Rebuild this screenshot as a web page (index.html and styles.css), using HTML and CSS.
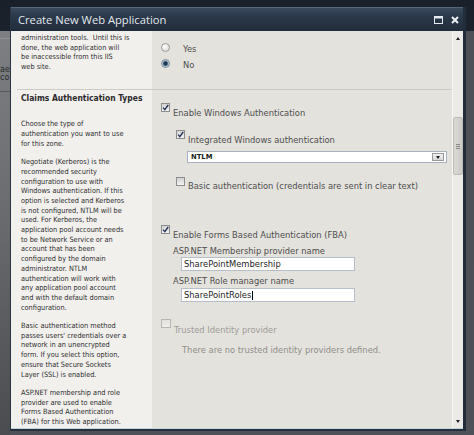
FILE: index.html
```html
<!DOCTYPE html>
<html lang="en">
<head>
<meta charset="utf-8">
<title>Create New Web Application</title>
<link rel="stylesheet" href="styles.css">
</head>
<body>
<div class="stage">
  <div class="page-left">
    <div class="page-left-body">
      <div class="bg-line"></div>
      <div class="bg-text">ae<br>co</div>
      <div class="bg-line dark"></div>
    </div>
  </div>
  <div class="dialog">
    <div class="titlebar">
      <span class="title">Create New Web Application</span>
      <span class="title-ctrls">
        <svg class="ic-max" width="9" height="8" viewBox="0 0 9 8"><rect x="0.5" y="0.5" width="8" height="7" fill="none" stroke="#e6ebf1"/><rect x="0.5" y="0.5" width="8" height="2" fill="#e6ebf1"/></svg>
        <svg class="ic-close" width="8" height="8" viewBox="0 0 8 8"><path d="M1 1L7 7M7 1L1 7" stroke="#eef2f6" stroke-width="2"/></svg>
      </span>
    </div>
    <div class="dlg-body">
      <div class="content">
        <div class="section s1">
          <div class="desc">
            <p>administration tools.&nbsp; Until this is<br>done, the web application will<br>be inaccessible from this IIS<br>web site.</p>
          </div>
          <div class="ctrl">
            <div class="radio-row"><span class="radio"></span><span class="lbl">Yes</span></div>
            <div class="radio-row"><span class="radio on"></span><span class="lbl">No</span></div>
          </div>
        </div>
        <div class="sep"></div>
        <div class="section s2">
          <div class="desc">
            <h3>Claims Authentication Types</h3>
            <p>Choose the type of<br>authentication you want to use<br>for this zone.</p>
            <p>Negotiate (Kerberos) is the<br>recommended security<br>configuration to use with<br>Windows authentication. If this<br>option is selected and Kerberos<br>is not configured, NTLM will be<br>used. For Kerberos, the<br>application pool account needs<br>to be Network Service or an<br>account that has been<br>configured by the domain<br>administrator. NTLM<br>authentication will work with<br>any application pool account<br>and with the default domain<br>configuration.</p>
            <p>Basic authentication method<br>passes users' credentials over a<br>network in an unencrypted<br>form. If you select this option,<br>ensure that Secure Sockets<br>Layer (SSL) is enabled.</p>
            <p>ASP.NET membership and role<br>provider are used to enable<br>Forms Based Authentication<br>(FBA) for this Web application.</p>
          </div>
          <div class="ctrl">
            <div class="cb-row r1"><span class="cb on"><svg viewBox="0 0 7 7" width="7" height="7"><path d="M1 3.6L2.8 5.6L6.2 1" stroke="#27355a" stroke-width="1.4" fill="none"/></svg></span><span class="lbl">Enable Windows Authentication</span></div>
            <div class="cb-row r2 sub"><span class="cb on"><svg viewBox="0 0 7 7" width="7" height="7"><path d="M1 3.6L2.8 5.6L6.2 1" stroke="#27355a" stroke-width="1.4" fill="none"/></svg></span><span class="lbl">Integrated Windows authentication</span></div>
            <div class="select"><span class="sel-text">NTLM</span><span class="sel-btn"><span class="tri-down"></span></span></div>
            <div class="cb-row r3 sub"><span class="cb"></span><span class="lbl">Basic authentication (credentials are sent in clear text)</span></div>
            <div class="cb-row r4"><span class="cb on"><svg viewBox="0 0 7 7" width="7" height="7"><path d="M1 3.6L2.8 5.6L6.2 1" stroke="#27355a" stroke-width="1.4" fill="none"/></svg></span><span class="lbl">Enable Forms Based Authentication (FBA)</span></div>
            <div class="field-lbl f1">ASP.NET Membership provider name</div>
            <div class="input i1">SharePointMembership</div>
            <div class="field-lbl f2">ASP.NET Role manager name</div>
            <div class="input i2">SharePointRoles<span class="caret"></span></div>
            <div class="cb-row r5 disabled"><span class="cb dis"></span><span class="lbl">Trusted Identity provider</span></div>
            <div class="note">There are no trusted identity providers defined.</div>
          </div>
        </div>
      </div>
      <div class="scrollbar">
        <div class="sb-btn"><span class="tri-up"></span></div>
        <div class="sb-track"><div class="sb-thumb"><span class="grip"></span></div></div>
        <div class="sb-btn"><span class="tri-down"></span></div>
      </div>
    </div>
  </div>
  <div class="page-right"></div>
</div>
</body>
</html>
```
FILE: styles.css
```css
* { box-sizing: border-box; }
html, body { margin: 0; padding: 0; }
body {
  width: 474px;
  height: 435px;
  overflow: hidden;
  background: #4f5158;
  font-family: "DejaVu Sans", sans-serif;
}
p, h3 { margin: 0; }

.stage {
  display: flex;
  height: 435px;
  background: linear-gradient(#19202a 0, #1b222c 31px, #4e5058 31px, #4f5158 100%);
}

/* page behind the dialog */
.page-left {
  width: 10px;
  flex: none;
  padding-top: 31px;
  overflow: hidden;
}
.page-left-body {
  height: 404px;
  background: linear-gradient(#7d7f83, #6c6e72 40%, #4a4c50);
  overflow: hidden;
}
.bg-line { height: 1px; margin-top: 7px; background: #909297; }
.bg-line.dark { margin-top: 9px; background: #55575b; }
.bg-text {
  margin-top: 27px;
  font-size: 8px;
  line-height: 8px;
  color: #2a2b2e;
  white-space: nowrap;
}
.page-right { flex: 1; }

/* dialog */
.dialog {
  width: 456px;
  flex: none;
  margin-top: 7px;
  align-self: flex-start;
  border-left: 1px solid #2a3544;
  border-right: 3px solid #222d3b;
  border-bottom: 2px solid #27313e;
}
.titlebar {
  height: 24px;
  display: flex;
  align-items: center;
  justify-content: space-between;
  padding: 0 4px 0 7px;
  background: linear-gradient(#3a4a5d 0, #2b394a 35%, #212d3b 100%);
  border-top: 1px solid #55677b;
}
.title {
  font-family: "Open Sans", "Noto Sans", sans-serif;
  font-size: 11.2px;
  color: #e2e8ee;
  line-height: 14px;
  margin-top: 1px;
}
.title-ctrls { display: flex; align-items: center; gap: 8px; }
.title-ctrls svg { display: block; }

.dlg-body {
  display: flex;
  height: 398px;
  border-bottom: 1px solid #c3d5de;
}
.content {
  width: 441px;
  flex: none;
  height: 397px;
  overflow: hidden;
  background: linear-gradient(to right, #f1f0ed 141px, #e4e2dd 141px);
}
.section { display: flex; }
.s1 { height: 58px; }
.desc {
  width: 141px;
  flex: none;
  padding-left: 10px;
  font-family: "DejaVu Sans Condensed", "DejaVu Sans", sans-serif;
  font-stretch: condensed;
  font-size: 7.3px;
  line-height: 9.7px;
  color: #2f2f2f;
  white-space: nowrap;
}
.s1 .desc p { margin-top: 1.85px; }
.s2 .desc h3 {
  margin-top: 3px;
  font-size: 8.45px;
  line-height: 10px;
  font-weight: bold;
  color: #2a2a2a;
}
.s2 .desc p { margin-top: 8.6px; }
.s2 .desc h3 + p { margin-top: 16.45px; }

.ctrl {
  flex: 1;
  padding-left: 9px;
  font-size: 8.35px;
  color: #4e4e4e;
  white-space: nowrap;
}
.lbl { line-height: 10px; }

/* radios */
.s1 .ctrl { padding-top: 8px; }
.radio-row { display: flex; align-items: center; height: 16px; }
.radio-row .lbl { margin-left: 13px; margin-top: 3px; }
.radio {
  width: 9px;
  height: 9px;
  border-radius: 50%;
  border: 1px solid #9c9c9c;
  background: radial-gradient(circle at 40% 35%, #ffffff, #d3d3d3);
}
.radio.on {
  border-color: #7d8a97;
  background: radial-gradient(circle, #1f3650 0, #1f3650 1.6px, #6f8aa5 2.4px, #dfe6ec 3.6px);
}

.sep { height: 1px; margin-left: 6px; background: #cdcbc6; }

/* checkboxes */
.cb-row { display: flex; align-items: flex-start; }
.cb {
  width: 9px;
  height: 9px;
  flex: none;
  display: flex;
  align-items: center;
  justify-content: center;
  border: 1px solid #8d8d8d;
  background: linear-gradient(#d2d2d2, #f3f3f3);
}
.cb svg { display: block; }
.cb.dis { width: 10px; border-color: #b7b6b2; background: linear-gradient(#e2e1de, #efeeeb); }
.cb-row .lbl { margin-left: 3px; }
.sub { margin-left: 15px; }
.r1 { margin-top: 13px; }
.r1 .lbl { padding-top: 5px; }
.r2 { margin-top: 12px; }
.r2 .lbl { padding-top: 5px; }
.r3 { margin-top: 14px; }
.r3 .lbl { padding-top: 4px; }
.r4 { margin-top: 34px; }
.r4 .lbl { padding-top: 5px; }
.r5 { margin-top: 17px; }
.r5 .lbl { padding-top: 6px; color: #9d9c99; }

/* select */
.select {
  margin: 6px 0 0 26px;
  width: 260px;
  height: 12px;
  display: flex;
  align-items: center;
  justify-content: space-between;
  border: 1px solid #a8b2be;
  background: #fff;
}
.sel-text {
  padding-left: 3px;
  font-size: 6.8px;
  font-weight: bold;
  line-height: 10px;
  color: #1c1c1c;
}
.sel-btn {
  width: 12px;
  height: 8px;
  margin-right: 2px;
  display: flex;
  align-items: center;
  justify-content: center;
  border: 1px solid #9a9a9a;
  background: linear-gradient(#f4f4f4, #d6d6d6);
}

/* fields */
.field-lbl { padding-left: 12px; line-height: 10px; }
.f1 { margin-top: 6px; }
.f2 { margin-top: 5px; }
.input {
  margin-left: 20px;
  width: 174px;
  height: 14px;
  padding-left: 2px;
  border: 1px solid #b5bec9;
  background: #fff;
  font-size: 8.4px;
  line-height: 12px;
  color: #1e1e1e;
  display: flex;
  align-items: center;
}
.i1 { margin-top: 1px; }
.i2 { margin-top: 2px; }
.caret { width: 1px; height: 9px; background: #000; margin-left: 0.5px; }
.note {
  margin-top: 10px;
  padding-left: 21px;
  line-height: 10px;
  color: #8f8e8b;
}

/* scrollbar */
.scrollbar {
  width: 11px;
  flex: none;
  display: flex;
  flex-direction: column;
  background: #ebeae7;
  border-left: 1px solid #f7f7f5;
}
.sb-btn { height: 14px; display: flex; align-items: center; justify-content: center; }
.sb-track { flex: 1; }
.sb-thumb {
  margin-top: 72px;
  width: 10px;
  height: 58px;
  display: flex;
  align-items: center;
  justify-content: center;
  border: 1px solid #bdbbb6;
  border-radius: 2px;
  background: linear-gradient(to right, #dcdad6, #cdcac5);
}
.grip {
  width: 4px;
  height: 5px;
  background: repeating-linear-gradient(#8b8986 0 1px, transparent 1px 2px);
}
.tri-up {
  width: 0;
  height: 0;
  border-left: 2.5px solid transparent;
  border-right: 2.5px solid transparent;
  border-bottom: 3px solid #1e1e1e;
}
.tri-down {
  width: 0;
  height: 0;
  border-left: 2.5px solid transparent;
  border-right: 2.5px solid transparent;
  border-top: 3px solid #1e1e1e;
}
```
